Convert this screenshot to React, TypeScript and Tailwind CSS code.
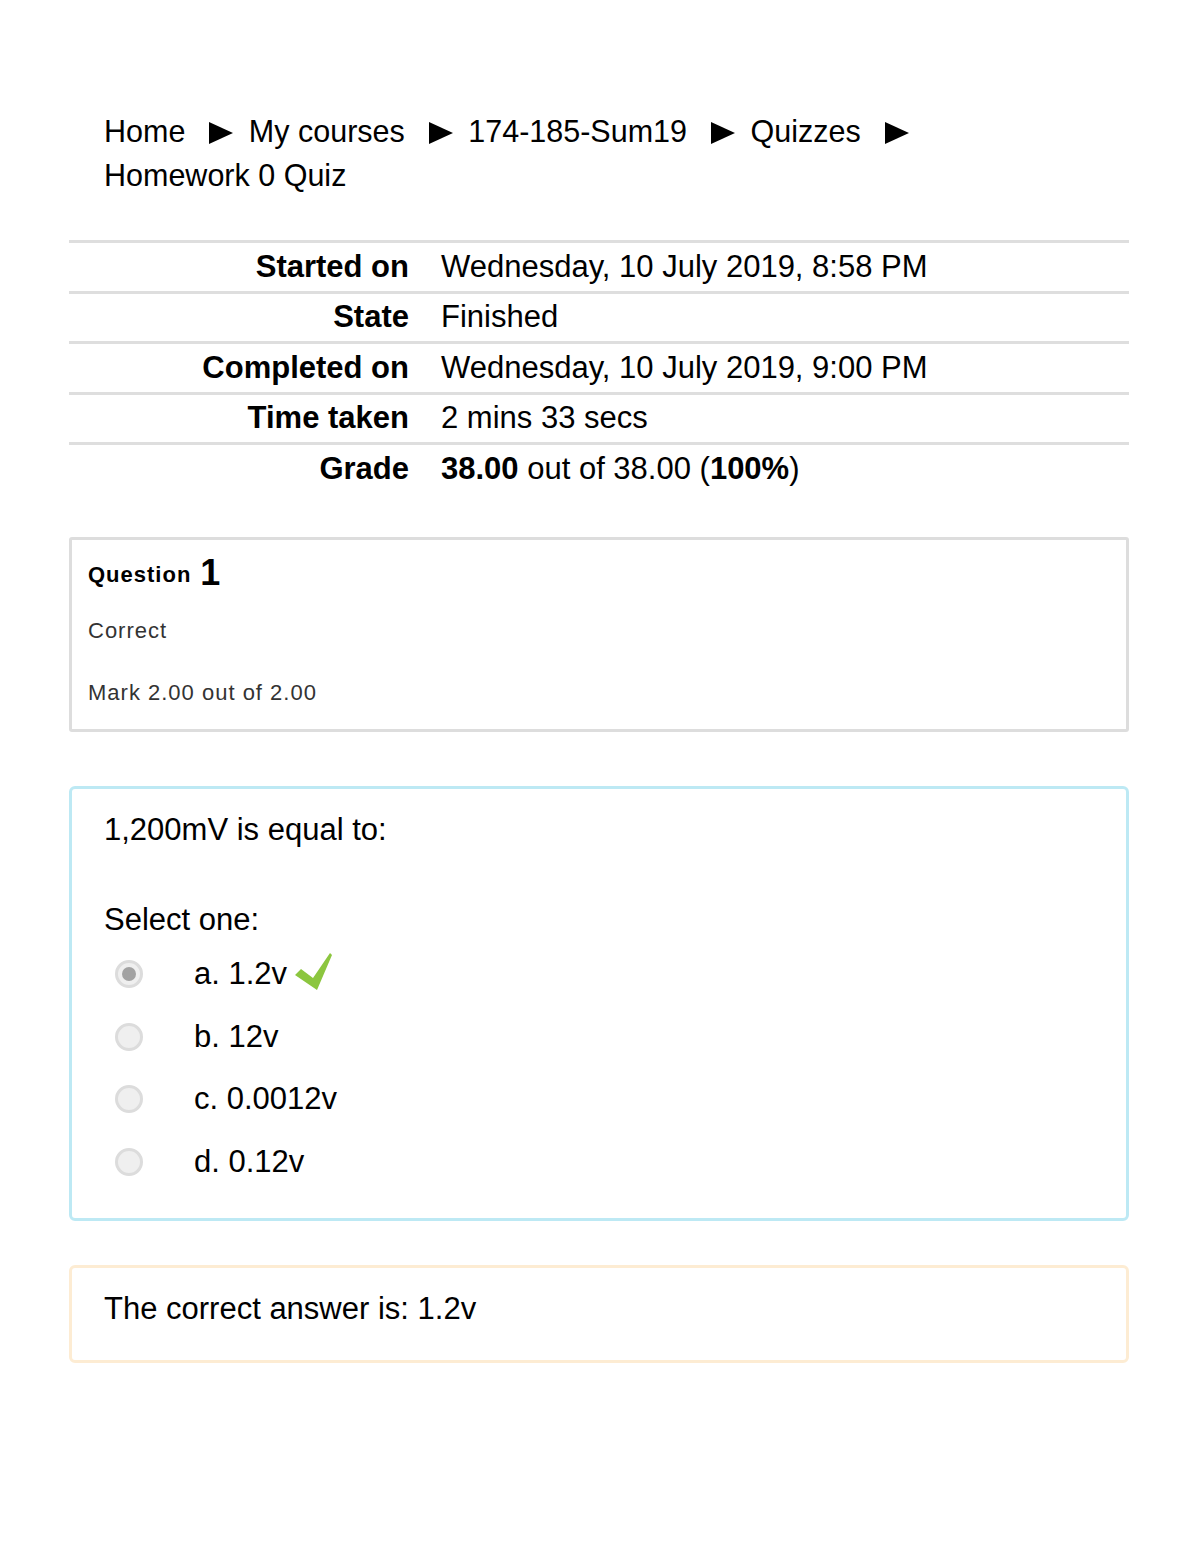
import React from 'react'

const crumbs = ['Home', 'My courses', '174-185-Sum19', 'Quizzes', 'Homework 0 Quiz']

const summary: { label: string; value: React.ReactNode }[] = [
  { label: 'Started on', value: 'Wednesday, 10 July 2019, 8:58 PM' },
  { label: 'State', value: 'Finished' },
  { label: 'Completed on', value: 'Wednesday, 10 July 2019, 9:00 PM' },
  { label: 'Time taken', value: '2 mins 33 secs' },
  {
    label: 'Grade',
    value: (
      <>
        <b>38.00</b> out of 38.00 (<b>100%</b>)
      </>
    )
  }
]

const options = [
  { text: 'a. 1.2v', checked: true },
  { text: 'b. 12v', checked: false },
  { text: 'c. 0.0012v', checked: false },
  { text: 'd. 0.12v', checked: false }
]

function Radio({ checked }: { checked: boolean }) {
  return (
    <div className="w-[28px] h-[28px] rounded-full border-[3px] border-[#dcdcdc] bg-[#efefef] flex items-center justify-center">
      {checked && <div className="w-[14px] h-[14px] rounded-full bg-[#a2a2a2]" />}
    </div>
  )
}

function Check() {
  return (
    <svg width="38" height="38" viewBox="0 0 38 38" className="ml-[7px] -mt-[4px]">
      <path d="M1 22 L7 16 L19 25 L36 0 L38 2 L23 37 Z" fill="#8cc63f" />
    </svg>
  )
}

function Arrow() {
  return (
    <svg width="24" height="22" viewBox="0 0 24 22" className="inline-block align-[-2px] ml-[24px] mr-[7px]">
      <path d="M0 0 L24 11 L0 22 Z" fill="#000" />
    </svg>
  )
}

export default function App() {
  return (
    <div className="w-[1200px] min-h-[1553px] bg-white text-black font-['Liberation_Sans',Arial,sans-serif]">
      <div className="ml-[69px] w-[1060px] pt-[109px] pb-[150px]">
        {/* breadcrumb */}
        <div className="px-[35px] text-[30.5px] leading-[44px]">
          {crumbs.map((c, i) => (
            <React.Fragment key={c}>
              <span className="whitespace-nowrap">{c}</span>
              {i < crumbs.length - 1 && (
                <>
                  <Arrow />{' '}
                </>
              )}
            </React.Fragment>
          ))}
        </div>

        {/* summary table */}
        <div className="mt-[43px] text-[31px]">
          {summary.map((row) => (
            <div key={row.label} className="h-[50.5px] border-t-[3px] border-[#dedede] flex items-center">
              <div className="w-[356px] pr-[16px] text-right font-bold">{row.label}</div>
              <div className="pl-[16px]">{row.value}</div>
            </div>
          ))}
        </div>

        {/* question info */}
        <div className="mt-[44px] h-[195px] border-[3px] border-[#dddddd] rounded-[3px] px-[16px] pt-[15px] text-[#333] text-[22px] tracking-[1px]">
          <div className="h-[36px] flex items-end text-black">
            <span className="font-bold">Question</span>
            <span className="ml-[9px] font-bold text-[36px] leading-[36px] tracking-normal">1</span>
          </div>
          <div className="mt-[25px] leading-[30px]">Correct</div>
          <div className="mt-[32px] leading-[30px]">Mark 2.00 out of 2.00</div>
        </div>

        {/* formulation */}
        <div className="mt-[54px] h-[435px] border-[3px] border-[#bde9f4] rounded-[6px] pl-[32px] pt-[19px] text-[31px] leading-[44px]">
          <div>1,200mV is equal to:</div>
          <div className="mt-[46px]">Select one:</div>
          <div className="mt-[1px]">
            {options.map((o) => (
              <div key={o.text} className="h-[62.7px] flex items-center">
                <div className="ml-[11px]">
                  <Radio checked={o.checked} />
                </div>
                <span className="ml-[51px]">{o.text}</span>
                {o.checked && <Check />}
              </div>
            ))}
          </div>
        </div>

        {/* feedback */}
        <div className="mt-[44px] h-[98px] border-[3px] border-[#fdecd3] rounded-[6px] pl-[32px] pt-[19px] text-[31px] leading-[44px]">
          The correct answer is: 1.2v
        </div>
      </div>
    </div>
  )
}
